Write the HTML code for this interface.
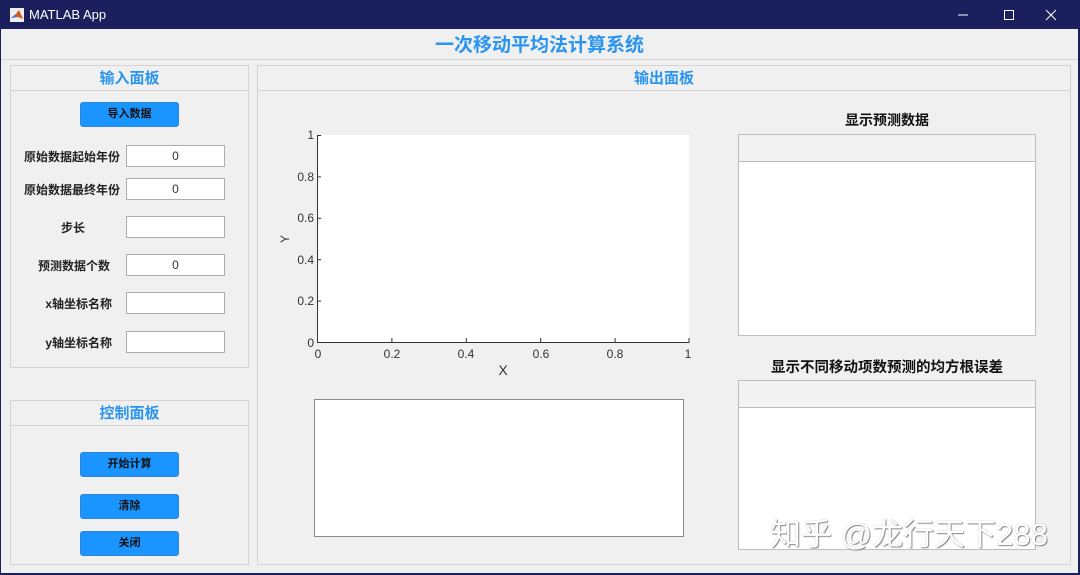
<!DOCTYPE html>
<html><head><meta charset="utf-8"><style>
*{margin:0;padding:0;box-sizing:border-box}
body{width:1080px;height:575px;overflow:hidden;background:#1b1f5e;font-family:"Liberation Sans","Noto Sans CJK SC",sans-serif;position:relative}
.a{position:absolute}
#main{left:1px;top:29px;width:1077px;height:544px;background:#f0f0f0}
.panel{position:absolute;border:1px solid #d4d4d4;background:#f0f0f0}
.ph{position:absolute;left:0;right:0;top:0;height:25px;border-bottom:1px solid #d4d4d4;text-align:center;color:#2a95f0;font-weight:bold;font-size:15px;line-height:25px}
.btn{position:absolute;left:80px;width:99px;height:25px;background:#1a94ff;border:1px solid #2f86d6;border-radius:3px;text-align:center;font-size:11px;font-weight:bold;line-height:23px;color:#111}
.lbl{position:absolute;width:110px;left:10px;text-align:right;font-size:12px;font-weight:bold;color:#222;white-space:nowrap}
.inp{position:absolute;left:126px;width:99px;height:22px;background:#fff;border:1px solid #adadad;text-align:center;font-size:12px;line-height:20px;color:#333}
.tk{font-size:12px;fill:#333;font-family:"Liberation Sans",sans-serif}
</style></head><body>
<div class="a" style="left:10px;top:8px;width:14px;height:14px;background:#eee;"></div>
<svg class="a" style="left:10px;top:8px" width="14" height="14"><path d="M1 10 L6 6 L9 2 L13 11 L8 9 Z" fill="#d9571d"/><path d="M1 10 L6 6 L7 9Z" fill="#3a7bd5"/></svg>
<div class="a" style="left:29px;top:7px;color:#fff;font-size:13px">MATLAB App</div>
<svg class="a" style="left:950px;top:5px" width="120" height="20"><line x1="8" y1="10" x2="18" y2="10" stroke="#fff" stroke-width="1"/><rect x="54.5" y="5.5" width="9" height="9" fill="none" stroke="#fff"/><path d="M96 5 L106 15 M106 5 L96 15" stroke="#fff"/></svg>
<div id="main" class="a">
<div class="a" style="left:0;right:0;top:0;height:31px;border-bottom:1px solid #d4d4d4;text-align:center;color:#2a95f0;font-size:19px;font-weight:bold;line-height:34px">一次移动平均法计算系统</div>
</div>
<div class="panel" style="left:10px;top:65px;width:239px;height:303px"><div class="ph">输入面板</div></div>
<div class="btn" style="top:102px">导入数据</div>
<div class="lbl" style="top:148px">原始数据起始年份</div><div class="inp" style="top:145px">0</div>
<div class="lbl" style="top:181px">原始数据最终年份</div><div class="inp" style="top:178px">0</div>
<div class="lbl" style="top:219px;width:75px">步长</div><div class="inp" style="top:216px"></div>
<div class="lbl" style="top:257px;width:100px">预测数据个数</div><div class="inp" style="top:254px">0</div>
<div class="lbl" style="top:295px;width:102px">x轴坐标名称</div><div class="inp" style="top:292px"></div>
<div class="lbl" style="top:334px;width:102px">y轴坐标名称</div><div class="inp" style="top:331px"></div>
<div class="panel" style="left:10px;top:400px;width:239px;height:165px"><div class="ph">控制面板</div></div>
<div class="btn" style="top:452px">开始计算</div>
<div class="btn" style="top:494px">清除</div>
<div class="btn" style="top:531px">关闭</div>
<div class="panel" style="left:257px;top:65px;width:814px;height:500px"><div class="ph">输出面板</div></div>
<svg class="a" style="left:270px;top:125px" width="440" height="255">
<rect x="47" y="10" width="372" height="207" fill="#fff"/>
<path d="M47.5 10 V217.5 H419.5" fill="none" stroke="#333"/>
<g stroke="#333">
<line x1="47" y1="10.5" x2="51" y2="10.5"/><line x1="47" y1="51.9" x2="51" y2="51.9"/><line x1="47" y1="93.3" x2="51" y2="93.3"/><line x1="47" y1="134.7" x2="51" y2="134.7"/><line x1="47" y1="176.1" x2="51" y2="176.1"/>
<line x1="121.9" y1="217" x2="121.9" y2="213"/><line x1="196.3" y1="217" x2="196.3" y2="213"/><line x1="270.7" y1="217" x2="270.7" y2="213"/><line x1="345.1" y1="217" x2="345.1" y2="213"/><line x1="419" y1="217" x2="419" y2="213"/>
</g>
<g class="tk" text-anchor="end"><text x="44" y="14">1</text><text x="44" y="56">0.8</text><text x="44" y="97">0.6</text><text x="44" y="139">0.4</text><text x="44" y="180">0.2</text><text x="44" y="222">0</text></g>
<g class="tk" text-anchor="middle"><text x="48" y="233">0</text><text x="122" y="233">0.2</text><text x="196" y="233">0.4</text><text x="271" y="233">0.6</text><text x="345" y="233">0.8</text><text x="418" y="233">1</text></g>
<text x="233" y="250" class="tk" style="font-size:14px" text-anchor="middle">X</text>
<text x="0" y="0" class="tk" style="font-size:12px" transform="translate(19,114) rotate(-90)" text-anchor="middle">Y</text>
</svg>
<div class="a" style="left:314px;top:399px;width:370px;height:138px;background:#fff;border:1px solid #8a8a8a"></div>
<div class="a" style="left:738px;top:110px;width:298px;text-align:center;font-size:14px;font-weight:bold;color:#111">显示预测数据</div>
<div class="a" style="left:738px;top:134px;width:298px;height:202px;background:#fff;border:1px solid #bdbdbd"><div style="height:27px;background:#f3f3f3;border-bottom:1px solid #bdbdbd"></div></div>
<div class="a" style="left:720px;top:356px;width:334px;text-align:center;font-size:14.5px;font-weight:bold;color:#111">显示不同移动项数预测的均方根误差</div>
<div class="a" style="left:738px;top:380px;width:298px;height:170px;background:#fff;border:1px solid #bdbdbd"><div style="height:27px;background:#f3f3f3;border-bottom:1px solid #bdbdbd"></div></div>
<div class="a" style="left:770px;top:509px;font-size:31px;color:#fff;text-shadow:1px 1px 1px #888,0 0 1px #aaa;white-space:nowrap">知乎 @龙行天下288</div>
</body></html>
